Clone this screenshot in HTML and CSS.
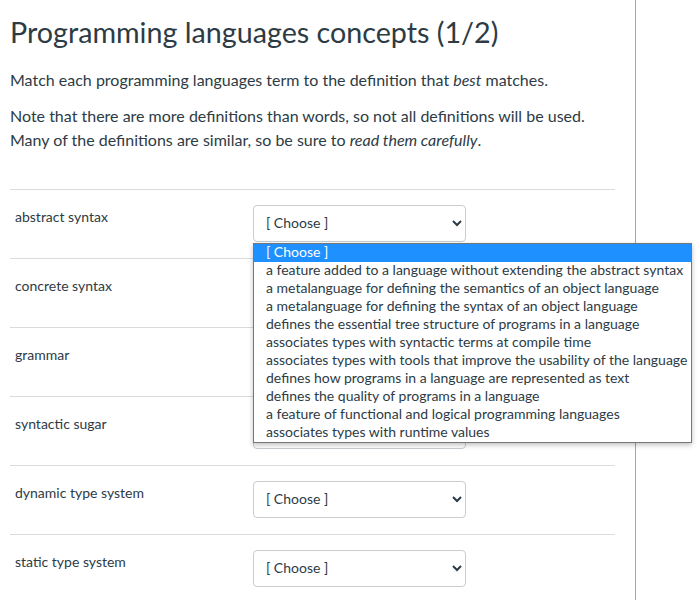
FILE: index.html
```html
<!DOCTYPE html>
<html>
<head>
<meta charset="utf-8">
<link rel="stylesheet" href="styles.css">
</head>
<body>
<div class="page">
  <div class="main">
    <h1 class="title">Programming languages concepts (1/2)</h1>
    <p class="intro">Match each programming languages term to the definition that <em>best</em> matches.</p>
    <p class="intro">Note that there are more definitions than words, so not all definitions will be used. Many of the definitions are similar, so be sure to <em>read them carefully</em>.</p>
    <div class="rows">
      <div class="row">
        <div class="label">abstract syntax</div>
        <div class="field">
          <select class="choice"><option>[ Choose ]</option></select>
          <ul class="menu">
            <li class="sel">[ Choose ]</li>
            <li>a feature added to a language without extending the abstract syntax</li>
            <li>a metalanguage for defining the semantics of an object language</li>
            <li>a metalanguage for defining the syntax of an object language</li>
            <li>defines the essential tree structure of programs in a language</li>
            <li>associates types with syntactic terms at compile time</li>
            <li>associates types with tools that improve the usability of the language</li>
            <li>defines how programs in a language are represented as text</li>
            <li>defines the quality of programs in a language</li>
            <li>a feature of functional and logical programming languages</li>
            <li>associates types with runtime values</li>
          </ul>
        </div>
      </div>
      <div class="row">
        <div class="label">concrete syntax</div>
        <div class="field"><select class="choice"><option>[ Choose ]</option></select></div>
      </div>
      <div class="row">
        <div class="label">grammar</div>
        <div class="field"><select class="choice"><option>[ Choose ]</option></select></div>
      </div>
      <div class="row">
        <div class="label">syntactic sugar</div>
        <div class="field"><select class="choice"><option>[ Choose ]</option></select></div>
      </div>
      <div class="row">
        <div class="label">dynamic type system</div>
        <div class="field"><select class="choice"><option>[ Choose ]</option></select></div>
      </div>
      <div class="row">
        <div class="label">static type system</div>
        <div class="field"><select class="choice"><option>[ Choose ]</option></select></div>
      </div>
    </div>
  </div>
</div>
</body>
</html>
```
FILE: styles.css
```css
html, body {
  margin: 0;
  padding: 0;
  background: #fff;
}
body {
  font-family: Lato, "Noto Sans", sans-serif;
  color: #2d3b45;
  overflow: hidden;
}
.page {
  display: flex;
  height: 600px;
}
.main {
  width: 625px;
  padding-left: 10px;
  border-right: 1px solid #a6a6a6;
  box-sizing: content-box;
}
.title {
  margin: 14px 0 0;
  font-size: 28.7px;
  font-weight: 400;
  line-height: 36px;
}
.intro {
  margin: 18px 0 0;
  font-size: 16px;
  line-height: 24px;
  width: 600px;
}
.intro + .intro {
  margin-top: 12px;
}
.rows {
  margin-top: 37px;
  width: 605px;
}
.row {
  display: grid;
  grid-template-columns: 238px 1fr;
  border-top: 1px solid #d8dcdf;
  height: 68px;
  padding-left: 5px;
}
.label {
  font-size: 14px;
  line-height: 20px;
  padding-top: 17px;
}
.field {
  position: relative;
  padding-top: 15px;
}
.choice {
  width: 213px;
  height: 37px;
  border: 1px solid #c7cdd1;
  border-radius: 4px;
  background: #fff;
  font-family: Lato, sans-serif;
  font-size: 14px;
  color: #2d3b45;
  padding: 0 8px 2px;
}
.menu {
  position: absolute;
  left: 0;
  top: 53px;
  width: 437px;
  margin: 0;
  padding: 0;
  list-style: none;
  background: #fff;
  border: 1px solid #767676;
  box-shadow: 0 2px 5px rgba(0,0,0,0.25);
  z-index: 5;
}
.menu li {
  font-size: 14px;
  line-height: 16px;
  height: 18px;
  padding-left: 12px;
  white-space: nowrap;
  color: #2d3b45;
  box-sizing: border-box;
}
.menu li.sel {
  background: #1e90ff;
  color: #fff;
}
```
